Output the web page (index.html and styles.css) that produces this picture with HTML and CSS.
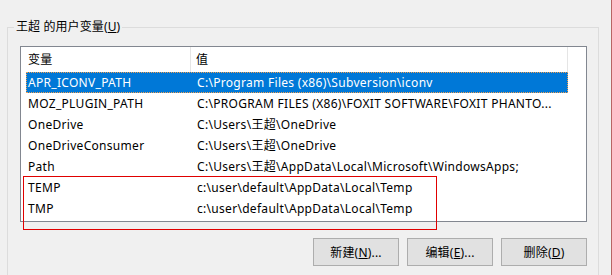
FILE: index.html
```html
<!DOCTYPE html>
<html lang="zh-CN">
<head>
  <meta charset="UTF-8">
  <title>用户变量</title>
  <link rel="stylesheet" href="styles.css">
</head>
<body>
  <div class="window">
    <fieldset class="group">
      <legend>王超 的用户变量(<u>U</u>)</legend>

      <div class="list">
        <div class="list-head">
          <div class="head-name">变量</div>
          <div class="head-value">值</div>
        </div>
        <div class="row selected">
          <div class="cell-name">APR_ICONV_PATH</div>
          <div class="cell-value">C:\Program Files (x86)\Subversion\iconv</div>
        </div>
        <div class="row">
          <div class="cell-name">MOZ_PLUGIN_PATH</div>
          <div class="cell-value">C:\PROGRAM FILES (X86)\FOXIT SOFTWARE\FOXIT PHANTO...</div>
        </div>
        <div class="row">
          <div class="cell-name">OneDrive</div>
          <div class="cell-value">C:\Users\王超\OneDrive</div>
        </div>
        <div class="row">
          <div class="cell-name">OneDriveConsumer</div>
          <div class="cell-value">C:\Users\王超\OneDrive</div>
        </div>
        <div class="row">
          <div class="cell-name">Path</div>
          <div class="cell-value">C:\Users\王超\AppData\Local\Microsoft\WindowsApps;</div>
        </div>
        <div class="row">
          <div class="cell-name">TEMP</div>
          <div class="cell-value">c:\user\default\AppData\Local\Temp</div>
        </div>
        <div class="row">
          <div class="cell-name">TMP</div>
          <div class="cell-value">c:\user\default\AppData\Local\Temp</div>
        </div>
      </div>

      <div class="buttons">
        <button>新建(<u>N</u>)...</button>
        <button>编辑(<u>E</u>)...</button>
        <button>删除(<u>D</u>)</button>
      </div>
    </fieldset>

    <div class="highlight"></div>
  </div>
</body>
</html>
```

FILE: styles.css
```css
* {
  box-sizing: border-box;
}
body {
  margin: 0;
  background: #f0f0f0;
  font-family: "Noto Sans", "Noto Sans CJK SC", sans-serif;
  font-size: 12px;
  color: #000;
}
.window {
  position: relative;
  width: 612px;
  height: 275px;
  overflow: hidden;
  border-right: 1px solid #b86464;
}
.group {
  margin: 19px 12px 0 7px;
  padding: 11px 11px 20px 12px;
  border: 1px solid #dcdcdc;
  min-width: 0;
}
.group legend {
  margin-left: -6px;
  padding: 0 2px;
  line-height: 16px;
  letter-spacing: 0.1px;
}
.list {
  height: 176px;
  background: #fff;
  border: 1px solid #828790;
  letter-spacing: 0.3px;
}
.list-head {
  display: flex;
  height: 25px;
  align-items: center;
}
.head-name {
  width: 170px;
  height: 100%;
  padding-left: 7px;
  line-height: 25px;
  border-right: 1px solid #e5e5e5;
}
.head-value {
  width: 377px;
  height: 100%;
  padding-left: 5px;
  line-height: 25px;
  border-right: 1px solid #e5e5e5;
}
.row {
  display: flex;
  width: 542px;
  height: 21px;
  margin-left: 5px;
  line-height: 21px;
  white-space: nowrap;
}
.row.selected {
  background: #0078d7;
  color: #fff;
  outline: 1px dotted #f0a050;
  outline-offset: -1px;
}
.cell-name {
  width: 165px;
  padding-left: 2px;
}
.cell-value {
  padding-left: 6px;
}
.buttons {
  display: flex;
  justify-content: flex-end;
  gap: 8px;
  margin-top: 16px;
}
.buttons button {
  width: 86px;
  height: 28px;
  padding: 0;
  background: #e1e1e1;
  border: 1px solid #adadad;
  font-family: inherit;
  font-size: 12px;
  letter-spacing: 0.2px;
  color: #000;
}
.highlight {
  position: absolute;
  left: 23px;
  top: 176px;
  width: 414px;
  height: 54px;
  border: 1px solid #e00000;
}
```
